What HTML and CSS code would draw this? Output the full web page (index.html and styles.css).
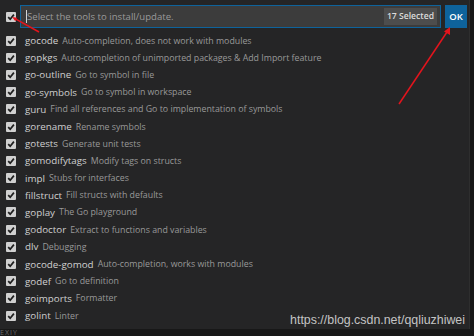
FILE: index.html
```html
<!DOCTYPE html>
<html>
<head>
<meta charset="utf-8">
<link rel="stylesheet" href="styles.css">
</head>
<body>
<div class="panel">
  <div class="header">
    <span class="cb"><svg viewBox="0 0 10 10" width="10" height="10"><rect x="0" y="0" width="10" height="10" rx="1" fill="#d0d0d0"/><path d="M2.2 5.2 L4.2 7.2 L7.9 2.6" fill="none" stroke="#1e1e1e" stroke-width="1.7"/></svg></span>
    <div class="input">
      <span class="caret"></span><span class="placeholder">Select the tools to install/update.</span>
      <span class="badge">17 Selected</span>
    </div>
    <div class="ok">OK</div>
  </div>
  <ul class="list">
    <li><span class="cb"><svg viewBox="0 0 10 10" width="10" height="10"><rect width="10" height="10" rx="1" fill="#d0d0d0"/><path d="M2.2 5.2 L4.2 7.2 L7.9 2.6" fill="none" stroke="#1e1e1e" stroke-width="1.7"/></svg></span><span class="name">gocode</span><span class="desc">Auto-completion, does not work with modules</span></li>
    <li><span class="cb"><svg viewBox="0 0 10 10" width="10" height="10"><rect width="10" height="10" rx="1" fill="#d0d0d0"/><path d="M2.2 5.2 L4.2 7.2 L7.9 2.6" fill="none" stroke="#1e1e1e" stroke-width="1.7"/></svg></span><span class="name">gopkgs</span><span class="desc">Auto-completion of unimported packages &amp; Add Import feature</span></li>
    <li><span class="cb"><svg viewBox="0 0 10 10" width="10" height="10"><rect width="10" height="10" rx="1" fill="#d0d0d0"/><path d="M2.2 5.2 L4.2 7.2 L7.9 2.6" fill="none" stroke="#1e1e1e" stroke-width="1.7"/></svg></span><span class="name">go-outline</span><span class="desc">Go to symbol in file</span></li>
    <li><span class="cb"><svg viewBox="0 0 10 10" width="10" height="10"><rect width="10" height="10" rx="1" fill="#d0d0d0"/><path d="M2.2 5.2 L4.2 7.2 L7.9 2.6" fill="none" stroke="#1e1e1e" stroke-width="1.7"/></svg></span><span class="name">go-symbols</span><span class="desc">Go to symbol in workspace</span></li>
    <li><span class="cb"><svg viewBox="0 0 10 10" width="10" height="10"><rect width="10" height="10" rx="1" fill="#d0d0d0"/><path d="M2.2 5.2 L4.2 7.2 L7.9 2.6" fill="none" stroke="#1e1e1e" stroke-width="1.7"/></svg></span><span class="name">guru</span><span class="desc">Find all references and Go to implementation of symbols</span></li>
    <li><span class="cb"><svg viewBox="0 0 10 10" width="10" height="10"><rect width="10" height="10" rx="1" fill="#d0d0d0"/><path d="M2.2 5.2 L4.2 7.2 L7.9 2.6" fill="none" stroke="#1e1e1e" stroke-width="1.7"/></svg></span><span class="name">gorename</span><span class="desc">Rename symbols</span></li>
    <li><span class="cb"><svg viewBox="0 0 10 10" width="10" height="10"><rect width="10" height="10" rx="1" fill="#d0d0d0"/><path d="M2.2 5.2 L4.2 7.2 L7.9 2.6" fill="none" stroke="#1e1e1e" stroke-width="1.7"/></svg></span><span class="name">gotests</span><span class="desc">Generate unit tests</span></li>
    <li><span class="cb"><svg viewBox="0 0 10 10" width="10" height="10"><rect width="10" height="10" rx="1" fill="#d0d0d0"/><path d="M2.2 5.2 L4.2 7.2 L7.9 2.6" fill="none" stroke="#1e1e1e" stroke-width="1.7"/></svg></span><span class="name">gomodifytags</span><span class="desc">Modify tags on structs</span></li>
    <li><span class="cb"><svg viewBox="0 0 10 10" width="10" height="10"><rect width="10" height="10" rx="1" fill="#d0d0d0"/><path d="M2.2 5.2 L4.2 7.2 L7.9 2.6" fill="none" stroke="#1e1e1e" stroke-width="1.7"/></svg></span><span class="name">impl</span><span class="desc">Stubs for interfaces</span></li>
    <li><span class="cb"><svg viewBox="0 0 10 10" width="10" height="10"><rect width="10" height="10" rx="1" fill="#d0d0d0"/><path d="M2.2 5.2 L4.2 7.2 L7.9 2.6" fill="none" stroke="#1e1e1e" stroke-width="1.7"/></svg></span><span class="name">fillstruct</span><span class="desc">Fill structs with defaults</span></li>
    <li><span class="cb"><svg viewBox="0 0 10 10" width="10" height="10"><rect width="10" height="10" rx="1" fill="#d0d0d0"/><path d="M2.2 5.2 L4.2 7.2 L7.9 2.6" fill="none" stroke="#1e1e1e" stroke-width="1.7"/></svg></span><span class="name">goplay</span><span class="desc">The Go playground</span></li>
    <li><span class="cb"><svg viewBox="0 0 10 10" width="10" height="10"><rect width="10" height="10" rx="1" fill="#d0d0d0"/><path d="M2.2 5.2 L4.2 7.2 L7.9 2.6" fill="none" stroke="#1e1e1e" stroke-width="1.7"/></svg></span><span class="name">godoctor</span><span class="desc">Extract to functions and variables</span></li>
    <li><span class="cb"><svg viewBox="0 0 10 10" width="10" height="10"><rect width="10" height="10" rx="1" fill="#d0d0d0"/><path d="M2.2 5.2 L4.2 7.2 L7.9 2.6" fill="none" stroke="#1e1e1e" stroke-width="1.7"/></svg></span><span class="name">dlv</span><span class="desc">Debugging</span></li>
    <li><span class="cb"><svg viewBox="0 0 10 10" width="10" height="10"><rect width="10" height="10" rx="1" fill="#d0d0d0"/><path d="M2.2 5.2 L4.2 7.2 L7.9 2.6" fill="none" stroke="#1e1e1e" stroke-width="1.7"/></svg></span><span class="name">gocode-gomod</span><span class="desc">Auto-completion, works with modules</span></li>
    <li><span class="cb"><svg viewBox="0 0 10 10" width="10" height="10"><rect width="10" height="10" rx="1" fill="#d0d0d0"/><path d="M2.2 5.2 L4.2 7.2 L7.9 2.6" fill="none" stroke="#1e1e1e" stroke-width="1.7"/></svg></span><span class="name">godef</span><span class="desc">Go to definition</span></li>
    <li><span class="cb"><svg viewBox="0 0 10 10" width="10" height="10"><rect width="10" height="10" rx="1" fill="#d0d0d0"/><path d="M2.2 5.2 L4.2 7.2 L7.9 2.6" fill="none" stroke="#1e1e1e" stroke-width="1.7"/></svg></span><span class="name">goimports</span><span class="desc">Formatter</span></li>
    <li><span class="cb"><svg viewBox="0 0 10 10" width="10" height="10"><rect width="10" height="10" rx="1" fill="#d0d0d0"/><path d="M2.2 5.2 L4.2 7.2 L7.9 2.6" fill="none" stroke="#1e1e1e" stroke-width="1.7"/></svg></span><span class="name">golint</span><span class="desc">Linter</span></li>
  </ul>
  <div class="watermark">https://blog.csdn.net/qqliuzhiwei</div>
</div>
<div class="bottom"><span class="peek">EXIY</span></div>
<svg class="arrows" width="474" height="336" viewBox="0 0 474 336">
  <g stroke="#e3141c" stroke-width="1.5" fill="#e3141c">
    <line x1="39" y1="32" x2="15" y2="18.7"/>
    <polygon points="12,17 17.3,17.7 15.4,21.2" stroke="none"/>
    <line x1="399" y1="104" x2="447" y2="32"/>
    <polygon points="450,27 450,35 444,31.5" stroke="none"/>
  </g>
</svg>
</body>
</html>
```

FILE: styles.css
```css
html, body {
  margin: 0;
  padding: 0;
  background: #181818;
  width: 474px;
  height: 336px;
  overflow: hidden;
  font-family: "Open Sans", "Noto Sans", sans-serif;
  position: relative;
}
.panel {
  width: 469px;
  height: 329px;
  background: #252526;
  border-right: 1px solid #2e2e2e;
  position: relative;
}
.header {
  display: flex;
  align-items: center;
  padding: 5px 0 0 6px;
  height: 23px;
}
.header .cb {
  margin-right: 4px;
}
.cb {
  display: flex;
  width: 10px;
  height: 10px;
  flex: none;
}
.input {
  flex: none;
  width: 419px;
  height: 21px;
  box-sizing: content-box;
  border: 1px solid #0e639c;
  background: #3c3c3c;
  display: flex;
  align-items: center;
  position: relative;
}
.caret {
  width: 1px;
  height: 13px;
  background: #d4d4d4;
  margin-left: 5px;
}
.placeholder {
  color: #9a9a9a;
  font-size: 9.6px;
}
.badge {
  margin-left: auto;
  margin-right: 3px;
  background: #4d4d4d;
  color: #dcdcdc;
  font-size: 8.6px;
  font-weight: 600;
  height: 17px;
  line-height: 17px;
  padding: 0 3px;
}
.ok {
  margin-left: 4px;
  width: 22px;
  height: 23px;
  background: #0e639c;
  color: #ffffff;
  font-size: 9.5px;
  font-weight: 600;
  display: flex;
  align-items: center;
  justify-content: center;
}
.list {
  list-style: none;
  margin: 4px 0 0 0;
  padding: 0;
}
.list li {
  display: flex;
  align-items: center;
  height: 17.2px;
  padding-left: 6px;
  white-space: nowrap;
}
.list .cb {
  margin-right: 9px;
}
.name {
  color: #d0d0d0;
  font-size: 9.8px;
  margin-right: 4px;
}
.desc {
  color: #999999;
  font-size: 8.8px;
}
.watermark {
  position: absolute;
  right: 4px;
  bottom: 2px;
  color: #c4c4c4;
  font-family: "Liberation Sans", Arial, sans-serif;
  font-size: 12.4px;
}
.bottom {
  height: 7px;
  background: #181818;
  overflow: hidden;
}
.peek {
  display: block;
  color: #6a6a6a;
  font-size: 7px;
  line-height: 7px;
  letter-spacing: 1px;
}
.arrows {
  position: absolute;
  left: 0;
  top: 0;
  pointer-events: none;
}
```
